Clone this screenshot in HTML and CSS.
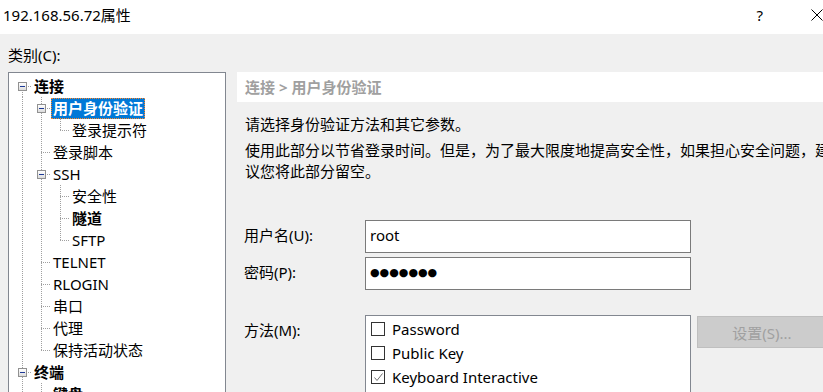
FILE: index.html
```html
<!DOCTYPE html>
<html lang="zh-CN">
<head>
    <meta charset="UTF-8">
    <title>192.168.56.72属性</title>
    <link rel="stylesheet" href="styles.css">
</head>
<body>
    <div class="titlebar">
        <span class="title">192.168.56.72属性</span>
        <div class="controls">
            <span class="help">?</span>
            <svg class="close" width="12" height="12" viewBox="0 0 12 12">
                <path d="M0.5 0.5 L11.5 11.5 M11.5 0.5 L0.5 11.5" stroke="#000" stroke-width="1" fill="none"/>
            </svg>
        </div>
    </div>

    <div class="main">
        <div class="cat-label">类别(C):</div>
        <div class="columns">
            <!-- category tree -->
            <div class="tree">
                <div class="row"><span class="g f"><i class="box"></i></span><span class="txt b">连接</span></div>
                <div class="row"><span class="g v"></span><span class="g t"><i class="box"></i></span><span class="txt b sel">用户身份验证</span></div>
                <div class="row"><span class="g v"></span><span class="g v"></span><span class="g l"></span><span class="txt">登录提示符</span></div>
                <div class="row"><span class="g v"></span><span class="g t"></span><span class="txt">登录脚本</span></div>
                <div class="row"><span class="g v"></span><span class="g t"><i class="box"></i></span><span class="txt">SSH</span></div>
                <div class="row"><span class="g v"></span><span class="g v"></span><span class="g t"></span><span class="txt">安全性</span></div>
                <div class="row"><span class="g v"></span><span class="g v"></span><span class="g t"></span><span class="txt b">隧道</span></div>
                <div class="row"><span class="g v"></span><span class="g v"></span><span class="g l"></span><span class="txt">SFTP</span></div>
                <div class="row"><span class="g v"></span><span class="g t"></span><span class="txt">TELNET</span></div>
                <div class="row"><span class="g v"></span><span class="g t"></span><span class="txt">RLOGIN</span></div>
                <div class="row"><span class="g v"></span><span class="g t"></span><span class="txt">串口</span></div>
                <div class="row"><span class="g v"></span><span class="g t"></span><span class="txt">代理</span></div>
                <div class="row"><span class="g v"></span><span class="g l"></span><span class="txt">保持活动状态</span></div>
                <div class="row"><span class="g t"><i class="box"></i></span><span class="txt b">终端</span></div>
                <div class="row"><span class="g v"></span><span class="g t"></span><span class="txt b">键盘</span></div>
            </div>

            <!-- settings panel -->
            <div class="panel">
                <div class="crumb">连接 &gt; 用户身份验证</div>
                <p class="intro">请选择身份验证方法和其它参数。</p>
                <p class="note">使用此部分以节省登录时间。但是，为了最大限度地提高安全性，如果担心安全问题，建议您将此部分留空。</p>

                <div class="field first">
                    <label class="lbl">用户名(U):</label>
                    <div class="input">root</div>
                </div>
                <div class="field">
                    <label class="lbl">密码(P):</label>
                    <div class="input dots">●●●●●●●</div>
                </div>

                <div class="field method">
                    <label class="lbl">方法(M):</label>
                    <div class="list">
                        <div class="opt"><span class="chk"></span>Password</div>
                        <div class="opt"><span class="chk"></span>Public Key</div>
                        <div class="opt"><span class="chk">
                            <svg width="11" height="11" viewBox="0 0 11 11"><path d="M1.5 5.5 L4 8.5 L9.5 1.5" stroke="#6d6d6d" stroke-width="1" fill="none"/></svg>
                        </span>Keyboard Interactive</div>
                    </div>
                    <button class="setup" disabled>设置(S)...</button>
                </div>
            </div>
        </div>
    </div>
</body>
</html>
```

FILE: styles.css
```css
html, body {
    overflow: hidden;
}
body {
    margin: 0;
    background: #f0f0f0;
    color: #000;
    font-family: "Noto Sans", "Noto Sans CJK SC", sans-serif;
    font-size: 15px;
}

/* title bar */
.titlebar {
    height: 34px;
    background: #fff;
    display: flex;
    padding-left: 3px;
}
.title {
    line-height: 20px;
    margin-top: 5px;
}
.controls {
    margin-left: auto;
    display: flex;
}
.help {
    line-height: 20px;
    margin-top: 5px;
}
.close {
    margin-top: 9px;
    margin-left: 48px;
}

.main {
    padding: 11px 0 0 8px;
}
.cat-label {
    line-height: 20px;
    margin-bottom: 7px;
}
.columns {
    display: flex;
    gap: 11px;
}

/* tree */
.tree {
    flex: none;
    width: 218px;
    height: 340px;
    box-sizing: border-box;
    border: 1px solid #828790;
    background: #fff;
    padding: 2px 0 0 4px;
}
.row {
    display: flex;
    align-items: center;
    height: 22px;
}
.g {
    flex: none;
    position: relative;
    width: 19px;
    height: 22px;
}
.g::before,
.g::after {
    content: "";
    position: absolute;
}
/* vertical dotted line */
.g.v::before, .g.t::before, .g.l::before, .g.f::before {
    left: 9px;
    width: 1px;
    background: linear-gradient(to bottom, #a0a0a0 50%, transparent 50%);
    background-size: 1px 2px;
}
.g.v::before, .g.t::before { top: 0; bottom: 0; }
.g.l::before { top: 0; height: 12px; }
.g.f::before { top: 11px; bottom: 0; }
/* horizontal dotted line */
.g.t::after, .g.l::after, .g.f::after {
    left: 9px;
    right: 0;
    top: 11px;
    height: 1px;
    background: linear-gradient(to right, #a0a0a0 50%, transparent 50%);
    background-size: 2px 1px;
}
.box {
    position: absolute;
    z-index: 1;
    left: 5px;
    top: 7px;
    width: 9px;
    height: 9px;
    box-sizing: border-box;
    border: 1px solid #919191;
    background: linear-gradient(to bottom, #fff, #dcdcdc);
}
.box::after {
    content: "";
    position: absolute;
    left: 1px;
    top: 3px;
    width: 5px;
    height: 1px;
    background: #1e3a96;
}
.txt {
    padding: 0 2px;
    line-height: 21px;
    white-space: nowrap;
}
.txt.b {
    font-weight: 700;
}
.txt.sel {
    background: #0078d7;
    color: #fff;
    outline: 1px dotted #ff8728;
    outline-offset: -1px;
}

/* right panel */
.panel {
    flex: none;
    width: 640px;
}
.crumb {
    height: 30px;
    line-height: 30px;
    background: #fff;
    padding-left: 8px;
    color: #a0a0a0;
    font-weight: 700;
}
.intro, .note {
    margin: 0;
    padding-left: 8px;
    line-height: 21px;
}
.intro {
    margin-top: 12px;
}
.note {
    margin-top: 5px;
    width: 590px;
}

.field {
    display: flex;
    align-items: center;
    margin-top: 4px;
}
.field.first {
    margin-top: 38px;
}
.lbl {
    width: 121px;
    padding: 0 0 3px 7px;
    line-height: 20px;
}
.input {
    width: 326px;
    height: 33px;
    box-sizing: border-box;
    border: 1px solid #7a7a7a;
    background: #fff;
    padding: 0 0 2px 4px;
    line-height: 29px;
}
.input.dots {
    font-family: "DejaVu Sans", sans-serif;
    font-size: 11px;
    padding-bottom: 0;
}

.field.method {
    align-items: flex-start;
    margin-top: 25px;
}
.field.method .lbl {
    padding: 5px 0 0 7px;
}
.list {
    width: 326px;
    height: 100px;
    box-sizing: border-box;
    border: 1px solid #828790;
    background: #fff;
    padding: 1px 0 0 5px;
}
.opt {
    display: flex;
    align-items: center;
    height: 24px;
    white-space: nowrap;
}
.chk {
    flex: none;
    width: 14px;
    height: 14px;
    box-sizing: border-box;
    border: 1px solid #333;
    background: #fff;
    margin-right: 7px;
    display: flex;
    align-items: center;
    justify-content: center;
}
.setup {
    margin: 1px 0 0 6px;
    width: 130px;
    height: 32px;
    background: #cccccc;
    border: 1px solid #bfbfbf;
    color: #a0a0a0;
    font-family: "Noto Sans", "Noto Sans CJK SC", sans-serif;
    font-size: 15px;
    padding: 0;
}
```
